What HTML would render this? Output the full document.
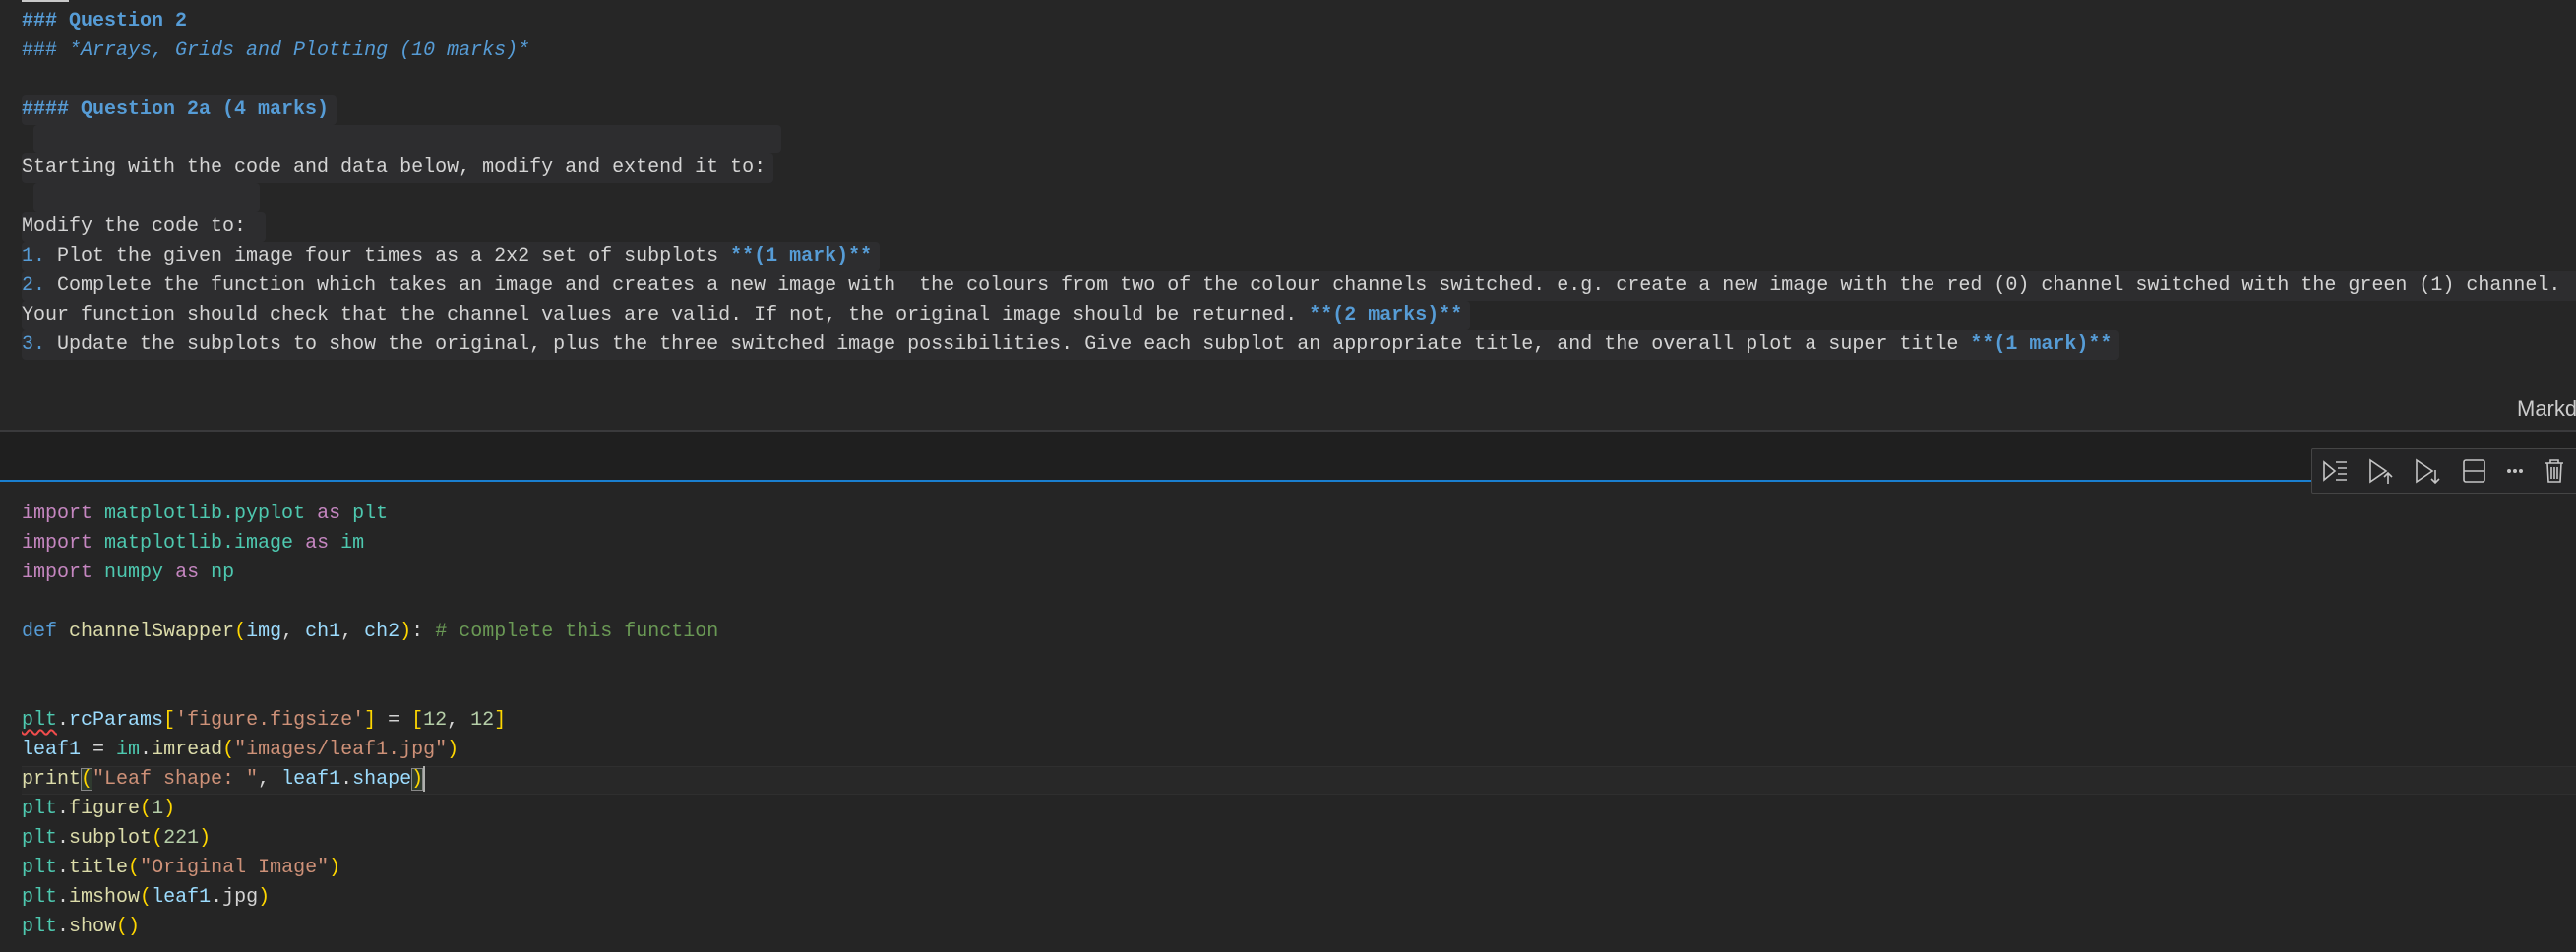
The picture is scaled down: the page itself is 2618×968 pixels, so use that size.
<!DOCTYPE html>
<html><head><meta charset="utf-8">
<style>
*{margin:0;padding:0;box-sizing:border-box}
body{width:2618px;height:968px;background:#262626;overflow:hidden;position:relative;font-family:"Liberation Mono",monospace;font-size:20px;color:#d4d4d4}
.l{position:absolute;left:22px;height:30px;line-height:30px;white-space:pre;letter-spacing:0px}
.hb{background:#2d2d2f;border-radius:4px;padding-right:8px;display:inline-block;height:30px}
.b{color:#569cd6}
.bb{color:#569cd6;font-weight:bold}
.kw{color:#c586c0}.mod{color:#4ec9b0}.fn{color:#dcdcaa}.par{color:#9cdcfe}.cm{color:#6a9955}.str{color:#ce9178}.num{color:#b5cea8}.br{color:#ffd700}.df{color:#569cd6}
.box{outline:1px solid #888;outline-offset:-1px;background:#2f3a2f}
</style></head><body>
<div style="position:absolute;left:22px;top:0;width:48px;height:2px;background:#c8c8c8"></div>

<div class="l" style="top:7px"><span class="bb">### Question 2</span></div>
<div class="l" style="top:37px"><span class="b">### <i>*Arrays, Grids and Plotting (10 marks)*</i></span></div>
<div class="l" style="top:97px"><span class="hb"><span class="bb">#### Question 2a (4 marks)</span></span></div>
<div style="position:absolute;left:34px;top:127px;width:760px;height:29px;background:#2d2d2f;border-radius:4px"></div>
<div class="l" style="top:156px"><span class="hb">Starting with the code and data below, modify and extend it to:</span></div>
<div style="position:absolute;left:34px;top:186px;width:230px;height:30px;background:#2d2d2f;border-radius:4px"></div>
<div class="l" style="top:216px"><span class="hb">Modify the code to: </span></div>
<div class="l" style="top:246px"><span class="hb"><span class="b">1.</span> Plot the given image four times as a 2x2 set of subplots <span class="bb">**(1 mark)**</span></span></div>
<div class="l" style="top:276px"><span class="hb" style="padding-right:20px"><span class="b">2.</span> Complete the function which takes an image and creates a new image with  the colours from two of the colour channels switched. e.g. create a new image with the red (0) channel switched with the green (1) channel.</span></div>
<div class="l" style="top:306px"><span class="hb">Your function should check that the channel values are valid. If not, the original image should be returned. <span class="bb">**(2 marks)**</span></span></div>
<div class="l" style="top:336px"><span class="hb"><span class="b">3.</span> Update the subplots to show the original, plus the three switched image possibilities. Give each subplot an appropriate title, and the overall plot a super title <span class="bb">**(1 mark)**</span></span></div>

<div style="position:absolute;left:2558px;top:403px;font-family:'Liberation Sans',sans-serif;font-size:22px;color:#cccccc;line-height:26px">Markdown</div>

<div style="position:absolute;left:0;top:437px;width:2618px;height:2px;background:#3a3a3c"></div>
<div style="position:absolute;left:0;top:439px;width:2618px;height:50px;background:#1f1f1f"></div>
<div style="position:absolute;left:0;top:488px;width:2618px;height:2px;background:#1a7fd0"></div>
<div style="position:absolute;left:0;top:490px;width:2618px;height:478px;background:#252525"></div>

<div style="position:absolute;left:2349px;top:456px;width:280px;height:46px;background:#252526;border:1px solid #454545;border-radius:2px"></div>
<svg style="position:absolute;left:2349px;top:456px" width="270" height="46" viewBox="0 0 270 46" fill="none" stroke="#c5c5c5" stroke-width="1.6">
 <path d="M13 14 L13 32 L24 23 Z"/><path d="M25 14 H36 M27 20 H36 M27 26 H36 M25 32 H36"/>
 <path d="M60 12 L60 34 L76 23 Z"/><path d="M78 36 V25 M74 29 L78 25 L82 29"/>
 <path d="M107 12 L107 34 L123 23 Z"/><path d="M126 22 V35 M122 31 L126 35 L130 31"/>
 <rect x="155" y="12" width="21" height="22" rx="2"/><path d="M155 23 H176"/>
 <circle cx="201" cy="23" r="1.2" fill="#c5c5c5"/><circle cx="207" cy="23" r="1.2" fill="#c5c5c5"/><circle cx="213" cy="23" r="1.2" fill="#c5c5c5"/>
 <path d="M238 15 H256 M243 15 V12 H251 V15 M240 15 L241 34 H253 L254 15 M244 19 V31 M247 19 V31 M250 19 V31"/>
</svg>

<div class="l" style="top:508px"><span class="kw">import</span> <span class="mod">matplotlib.pyplot</span> <span class="kw">as</span> <span class="mod">plt</span></div>
<div class="l" style="top:538px"><span class="kw">import</span> <span class="mod">matplotlib.image</span> <span class="kw">as</span> <span class="mod">im</span></div>
<div class="l" style="top:568px"><span class="kw">import</span> <span class="mod">numpy</span> <span class="kw">as</span> <span class="mod">np</span></div>
<div class="l" style="top:628px"><span class="df">def</span> <span class="fn">channelSwapper</span><span class="br">(</span><span class="par">img</span>, <span class="par">ch1</span>, <span class="par">ch2</span><span class="br">)</span>: <span class="cm"># complete this function</span></div>
<div class="l" style="top:718px"><span class="mod" style="text-decoration:underline wavy #f14c4c;text-underline-offset:4px">plt</span>.<span class="par">rcParams</span><span class="br">[</span><span class="str">'figure.figsize'</span><span class="br">]</span> = <span class="br">[</span><span class="num">12</span>, <span class="num">12</span><span class="br">]</span></div>
<div class="l" style="top:748px"><span class="par">leaf1</span> = <span class="mod">im</span>.<span class="fn">imread</span><span class="br">(</span><span class="str">"images/leaf1.jpg"</span><span class="br">)</span></div>
<div style="position:absolute;left:22px;top:779px;width:2596px;height:29px;background:#282828;border-top:1px solid #2f2f2f;border-bottom:1px solid #2f2f2f"></div>
<div class="l" style="top:778px"><span class="fn">print</span><span class="br box">(</span><span class="str">"Leaf shape: "</span>, <span class="par">leaf1</span>.<span class="par">shape</span><span class="br box">)</span><span style="display:inline-block;width:2px;height:26px;background:#aeafad;vertical-align:middle"></span></div>
<div class="l" style="top:808px"><span class="mod">plt</span>.<span class="fn">figure</span><span class="br">(</span><span class="num">1</span><span class="br">)</span></div>
<div class="l" style="top:838px"><span class="mod">plt</span>.<span class="fn">subplot</span><span class="br">(</span><span class="num">221</span><span class="br">)</span></div>
<div class="l" style="top:868px"><span class="mod">plt</span>.<span class="fn">title</span><span class="br">(</span><span class="str">"Original Image"</span><span class="br">)</span></div>
<div class="l" style="top:898px"><span class="mod">plt</span>.<span class="fn">imshow</span><span class="br">(</span><span class="par">leaf1</span>.jpg<span class="br">)</span></div>
<div class="l" style="top:928px"><span class="mod">plt</span>.<span class="fn">show</span><span class="br">()</span></div>
</body></html>
